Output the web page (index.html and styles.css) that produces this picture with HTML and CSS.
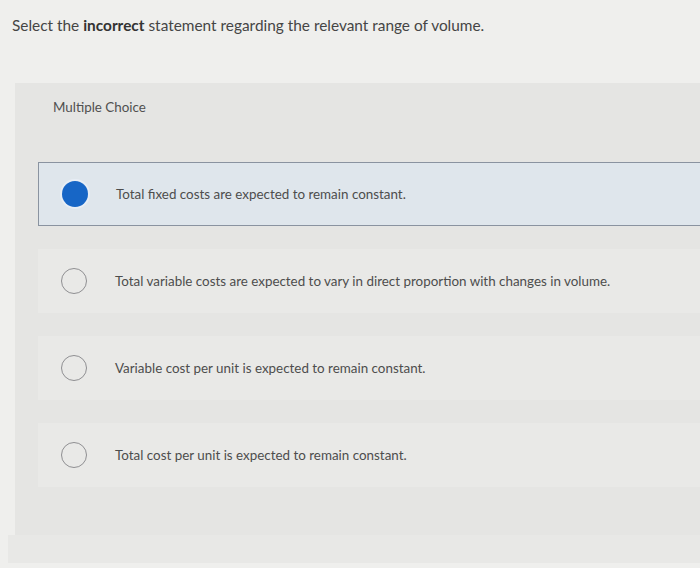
FILE: index.html
```html
<!DOCTYPE html>
<html lang="en">
<head>
<meta charset="utf-8">
<title>Multiple Choice</title>
<link rel="stylesheet" href="styles.css">
</head>
<body>
<p class="question">Select the <strong>incorrect</strong> statement regarding the relevant range of volume.</p>
<section class="panel">
  <div class="label">Multiple Choice</div>
  <ul class="options">
    <li class="option selected">
      <span class="radio"></span>
      <span class="text">Total fixed costs are expected to remain constant.</span>
    </li>
    <li class="option">
      <span class="radio"></span>
      <span class="text">Total variable costs are expected to vary in direct proportion with changes in volume.</span>
    </li>
    <li class="option">
      <span class="radio"></span>
      <span class="text">Variable cost per unit is expected to remain constant.</span>
    </li>
    <li class="option">
      <span class="radio"></span>
      <span class="text">Total cost per unit is expected to remain constant.</span>
    </li>
  </ul>
</section>
<div class="footer-band"></div>
</body>
</html>
```
FILE: styles.css
```css
html, body {
  margin: 0;
  padding: 0;
}
body {
  background: #efefed;
  font-family: Lato, "Open Sans", Arial, sans-serif;
  color: #444;
  overflow: hidden;
  width: 700px;
  height: 568px;
}
.question {
  margin: 0;
  padding: 15px 0 0 12px;
  height: 68px;
  font-size: 15.4px;
  line-height: 20px;
  color: #454545;
  box-sizing: border-box;
}
.question strong {
  font-weight: 700;
  color: #333;
}
.panel {
  margin-left: 15px;
  margin-top: 15px;
  background: #e5e5e3;
  padding: 14px 0 48px 0;
}
.label {
  padding-left: 38px;
  font-size: 13.4px;
  line-height: 20px;
  color: #505050;
}
.options {
  list-style: none;
  margin: 45px 0 0 23px;
  padding: 0;
  display: flex;
  flex-direction: column;
  gap: 23px;
}
.option {
  height: 64px;
  box-sizing: border-box;
  border: 1px solid transparent;
  border-right: none;
  background: #e9e9e7;
  display: flex;
  align-items: center;
  padding-left: 22px;
  gap: 28px;
  font-size: 13.4px;
  color: #4d4d4d;
}
.option.selected {
  background: #dfe6ec;
  border-color: #8a93a0;
  padding-left: 23px;
}
.radio {
  width: 26px;
  height: 26px;
  border-radius: 50%;
  box-sizing: border-box;
  border: 1.5px solid #8f8f92;
  flex: none;
}
.selected .radio {
  border: none;
  background: #1766c6;
  box-shadow: 0 0 0 2px #e8eef5;
}
.footer-band {
  height: 28px;
  margin-left: 8px;
  background: #e8e8e6;
}
```
